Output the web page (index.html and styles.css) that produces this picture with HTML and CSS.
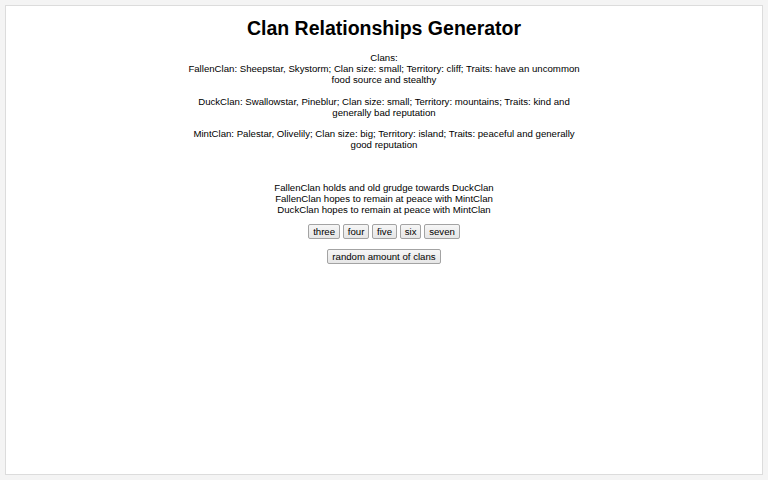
FILE: index.html
```html
<!DOCTYPE html>
<html lang="en">
<head>
	<meta charset="UTF-8">
	<title>Clan Relationships Generator</title>
	<link rel="stylesheet" href="styles.css">
</head>
<body>
	<main class="page">
		<h1>Clan Relationships Generator</h1>

		<section class="clans">
			<p>Clans:<br>FallenClan: Sheepstar, Skystorm; Clan size: small; Territory: cliff; Traits: have an uncommon food source and stealthy</p>
			<p>DuckClan: Swallowstar, Pineblur; Clan size: small; Territory: mountains; Traits: kind and generally bad reputation</p>
			<p>MintClan: Palestar, Olivelily; Clan size: big; Territory: island; Traits: peaceful and generally good reputation</p>
		</section>

		<section class="relations">
			<p>FallenClan holds and old grudge towards DuckClan<br>FallenClan hopes to remain at peace with MintClan<br>DuckClan hopes to remain at peace with MintClan</p>
		</section>

		<div class="counts">
			<button>three</button>
			<button>four</button>
			<button>five</button>
			<button>six</button>
			<button>seven</button>
		</div>

		<div class="random">
			<button>random amount of clans</button>
		</div>
	</main>
</body>
</html>
```

FILE: styles.css
```css
html, body {
	margin: 0;
	height: 100%;
}

body {
	box-sizing: border-box;
	padding: 5px;

	background: #f4f4f4;

	font-family: 'Liberation Sans', Arial, sans-serif;
	font-size: 9.65px;
	color: #000;
}

.page {
	box-sizing: border-box;
	height: 100%;
	padding-top: 11px;

	background: #fff;
	border: 1px solid #dcdcdc;

	text-align: center;
}

h1 {
	margin: 0 0 12px;

	font-size: 19.5px;
	line-height: 23px;
}

.clans,
.relations {
	width: 398px;
	margin: 0 auto;
}

p {
	margin: 0 0 10.5px;
	line-height: 11px;
}

.relations {
	margin-top: 32px;
}

.counts {
	margin-top: -2px;
}

.random {
	margin-top: 10px;
}

button {
	margin: 0;
	padding: 1px 4px;

	font-family: inherit;
	font-size: 9.65px;
	line-height: 11px;
	color: #000;

	background: linear-gradient(#f6f6f6, #e6e6e6);
	border: 1px solid #a3a3a3;
	border-radius: 2px;
}
```
